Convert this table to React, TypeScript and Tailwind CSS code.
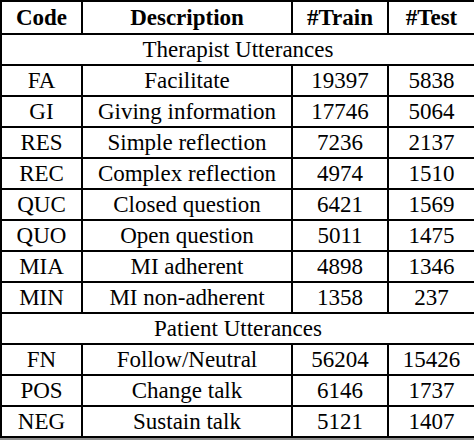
const therapist = [
  ["FA", "Facilitate", "19397", "5838"],
  ["GI", "Giving information", "17746", "5064"],
  ["RES", "Simple reflection", "7236", "2137"],
  ["REC", "Complex reflection", "4974", "1510"],
  ["QUC", "Closed question", "6421", "1569"],
  ["QUO", "Open question", "5011", "1475"],
  ["MIA", "MI adherent", "4898", "1346"],
  ["MIN", "MI non-adherent", "1358", "237"],
];

const patient = [
  ["FN", "Follow/Neutral", "56204", "15426"],
  ["POS", "Change talk", "6146", "1737"],
  ["NEG", "Sustain talk", "5121", "1407"],
];

const cell = "border-2 border-black text-center leading-none p-0 font-['Liberation_Serif',serif] text-[23px]";

function Row({ cells }: { cells: string[] }) {
  return (
    <tr className="h-[31px]">
      {cells.map((c, i) => (
        <td key={i} className={cell}>
          {c}
        </td>
      ))}
    </tr>
  );
}

function Section({ title }: { title: string }) {
  return (
    <tr className="h-[31px]">
      <td colSpan={4} className={cell}>
        {title}
      </td>
    </tr>
  );
}

export default function App() {
  return (
    <div className="w-[474px] h-[440px] bg-[#8c8c8c] font-serif text-black">
      <table className="w-[474px] table-fixed border-collapse bg-white">
        <colgroup>
          <col className="w-[81px]" />
          <col className="w-[210px]" />
          <col className="w-[96px]" />
          <col className="w-[87px]" />
        </colgroup>
        <thead>
          <tr className="h-[33px]">
            <th className={cell + " font-bold"}>Code</th>
            <th className={cell + " font-bold"}>Description</th>
            <th className={cell + " font-bold"}>#Train</th>
            <th className={cell + " font-bold"}>#Test</th>
          </tr>
        </thead>
        <tbody>
          <Section title="Therapist Utterances" />
          {therapist.map((r) => (
            <Row key={r[0]} cells={r} />
          ))}
          <Section title="Patient Utterances" />
          {patient.map((r) => (
            <Row key={r[0]} cells={r} />
          ))}
        </tbody>
      </table>
    </div>
  );
}
